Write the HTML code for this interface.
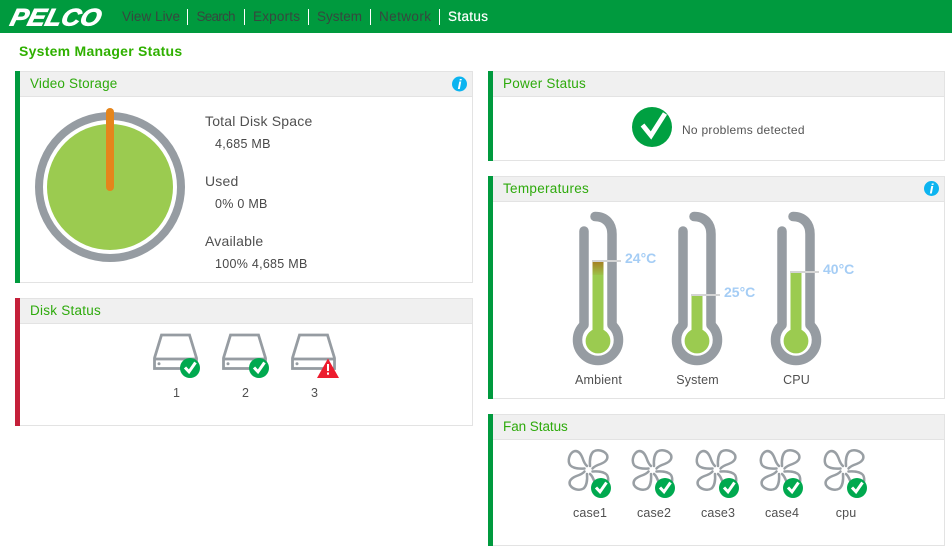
<!DOCTYPE html>
<html><head><meta charset="utf-8"><style>
html,body{margin:0;padding:0;background:#fff;width:952px;height:553px;overflow:hidden}
svg{position:absolute;left:0;top:0}
text{font-family:"Liberation Sans",Arial,sans-serif}
.nav{font-size:13.500px;fill:#37473f}
.t{font-size:13.500px;fill:#2eaa0c;letter-spacing:.2px}
.l1{font-size:14px;fill:#505050;letter-spacing:.2px}
.l2{font-size:12.500px;fill:#484848;letter-spacing:.28px}
.c{font-size:12.500px;fill:#505050;text-anchor:middle;letter-spacing:.15px}
.temp{font-size:14px;font-weight:bold;fill:#a5cdf5}
</style></head><body>
<svg width="952" height="553" viewBox="0 0 952 553" xmlns="http://www.w3.org/2000/svg">
<defs>
<linearGradient id="br" x1="0" y1="0" x2="0" y2="1"><stop offset="0" stop-color="#a67c20"/><stop offset="1" stop-color="#9bcb50"/></linearGradient>
<g id="ok"><circle r="10" fill="#00a94f"/><path d="M-5 -.5L-1 3.800L5.500 -5.500" fill="none" stroke="#fff" stroke-width="3"/></g>
<g id="disk" fill="none" stroke="#969ca2" stroke-width="2.800"><path d="M154.500 358L161.500 335H189.500L196.500 358"/><rect x="154.500" y="359" width="42" height="9.500"/><circle cx="159" cy="363.700" r="1.500" fill="#969ca2" stroke="none"/></g>
<g id="therm" fill="none" stroke="#969ca2" stroke-width="9.500" stroke-linecap="round">
<path d="M-14 26V120M14 120V29C14 19 8 11.500 -3 11.500"/><path d="M-14 120A20.500 20.500 0 1 0 14 120" stroke-linecap="butt"/>
<circle cx="0" cy="136" r="12.400" fill="#9bcb50" stroke="none"/></g>
<path id="bl" d="M1.500 -4C1 -10 2 -16 5 -18.500C9 -21 16 -19.500 18.500 -15C20 -11 17 -8 12 -6C9 -5 6 -4 4 -1.500" fill="none" stroke="#999fa4" stroke-width="2.500" stroke-linejoin="round" stroke-linecap="round"/>
<g id="fan"><use href="#bl"/><use href="#bl" transform="rotate(90)"/><use href="#bl" transform="rotate(180)"/><use href="#bl" transform="rotate(270)"/></g>
<g id="info"><circle r="7.500" fill="#0cb4f0"/><text x="0" y="5" text-anchor="middle" font-size="14" font-weight="bold" font-style="italic" fill="#fff">i</text></g>
</defs>

<rect width="952" height="33" fill="#009a3e"/>
<text transform="translate(9 25.500) skewX(-14) scale(1.09 1)" font-size="24" font-weight="bold" font-style="italic" fill="#fff" stroke="#fff" stroke-width=".9">PELCO</text>
<text class="nav" x="122" y="21" textLength="58">View Live</text>
<text class="nav" x="196.500" y="21" textLength="39">Search</text>
<text class="nav" x="253" y="21" textLength="47">Exports</text>
<text class="nav" x="317" y="21" textLength="45">System</text>
<text class="nav" x="379" y="21" textLength="52">Network</text>
<text class="nav" x="448" y="21" textLength="40" style="fill:#fff;stroke:#fff;stroke-width:.2">Status</text>
<g fill="#fff"><rect x="187" y="9" width="1" height="16"/><rect x="244" y="9" width="1" height="16"/><rect x="308" y="9" width="1" height="16"/><rect x="370" y="9" width="1" height="16"/><rect x="439" y="9" width="1" height="16"/></g>

<text x="19" y="56" font-size="14" font-weight="bold" fill="#2fb000" letter-spacing=".26">System Manager Status</text>

<!-- panels -->
<g fill="#fff" stroke="#e3e3e3">
<rect x="15.500" y="71.500" width="457" height="211"/>
<rect x="15.500" y="298.500" width="457" height="127"/>
<rect x="488.500" y="71.500" width="456" height="89"/>
<rect x="488.500" y="176.500" width="456" height="222"/>
<rect x="488.500" y="414.500" width="456" height="131"/>
</g>
<g fill="#f0f0f0" stroke="#e3e3e3">
<rect x="15.500" y="71.500" width="457" height="25"/>
<rect x="15.500" y="298.500" width="457" height="25"/>
<rect x="488.500" y="71.500" width="456" height="25"/>
<rect x="488.500" y="176.500" width="456" height="25"/>
<rect x="488.500" y="414.500" width="456" height="25"/>
</g>
<g fill="#009a3e">
<rect x="15" y="71" width="5" height="212"/>
<rect x="488" y="71" width="5" height="90"/>
<rect x="488" y="176" width="5" height="223"/>
<rect x="488" y="414" width="5" height="132"/>
</g>
<rect x="15" y="298" width="5" height="128" fill="#c4203a"/>
<text class="t" x="30" y="88" textLength="87.500">Video Storage</text>
<text class="t" x="30" y="315" textLength="71">Disk Status</text>
<text class="t" x="503" y="88" textLength="83">Power Status</text>
<text class="t" x="503" y="193" textLength="86">Temperatures</text>
<text class="t" x="503" y="431" textLength="65">Fan Status</text>
<use href="#info" x="459.500" y="84"/>
<use href="#info" x="931.500" y="188.500"/>

<!-- pie -->
<circle cx="110" cy="187" r="71" fill="none" stroke="#969ca2" stroke-width="8"/>
<circle cx="110" cy="187" r="63" fill="#9bcb50"/>
<path d="M110 112V187" stroke="#e5851b" stroke-width="8" stroke-linecap="round"/>
<text class="l1" x="205" y="126">Total Disk Space</text>
<text class="l2" x="215" y="148">4,685 MB</text>
<text class="l1" x="205" y="186">Used</text>
<text class="l2" x="215" y="208">0% 0 MB</text>
<text class="l1" x="205" y="246">Available</text>
<text class="l2" x="215" y="268">100% 4,685 MB</text>

<!-- disks -->
<use href="#disk"/><use href="#ok" x="190" y="368"/>
<use href="#disk" x="69"/><use href="#ok" x="259" y="368"/>
<use href="#disk" x="138"/>
<path d="M328 358.500L339 378H317Z" fill="#ed1c2e"/><rect x="327" y="364" width="2" height="7" fill="#fff"/><rect x="327" y="372.500" width="2" height="2.200" fill="#fff"/>
<text class="c" x="176.500" y="397">1</text>
<text class="c" x="245.500" y="397">2</text>
<text class="c" x="314.500" y="397">3</text>

<!-- power -->
<circle cx="652" cy="127" r="20" fill="#00a041"/>
<path d="M642.500 125L651 135.500L665 113.500" fill="none" stroke="#fff" stroke-width="4.800"/>
<text x="682" y="134" font-size="12" fill="#555" letter-spacing=".27">No problems detected</text>

<!-- thermometers -->
<use href="#therm" x="598" y="205"/>
<use href="#therm" x="697" y="205"/>
<use href="#therm" x="796" y="205"/>
<rect x="592.500" y="261" width="11" height="16" fill="url(#br)"/>
<rect x="592.500" y="275" width="11" height="60" fill="#9bcb50"/>
<rect x="691.500" y="295" width="11" height="40" fill="#9bcb50"/>
<rect x="790.500" y="272" width="11" height="63" fill="#9bcb50"/>
<rect x="592" y="260" width="29" height="2" fill="#d4d4d4"/>
<rect x="691" y="294" width="29" height="2" fill="#d4d4d4"/>
<rect x="790" y="271" width="29" height="2" fill="#d4d4d4"/>
<text class="temp" x="625" y="263">24°C</text>
<text class="temp" x="724" y="297">25°C</text>
<text class="temp" x="823" y="274">40°C</text>
<text class="c" x="598.500" y="384">Ambient</text>
<text class="c" x="697.500" y="384">System</text>
<text class="c" x="796.500" y="384">CPU</text>

<!-- fans -->
<use href="#fan" x="588.500" y="470"/><use href="#ok" x="601" y="488"/>
<use href="#fan" x="652.500" y="470"/><use href="#ok" x="665" y="488"/>
<use href="#fan" x="716.500" y="470"/><use href="#ok" x="729" y="488"/>
<use href="#fan" x="780.500" y="470"/><use href="#ok" x="793" y="488"/>
<use href="#fan" x="844.500" y="470"/><use href="#ok" x="857" y="488"/>
<text class="c" x="590" y="517">case1</text>
<text class="c" x="654" y="517">case2</text>
<text class="c" x="718" y="517">case3</text>
<text class="c" x="782" y="517">case4</text>
<text class="c" x="846" y="517">cpu</text>
</svg>
</body></html>
